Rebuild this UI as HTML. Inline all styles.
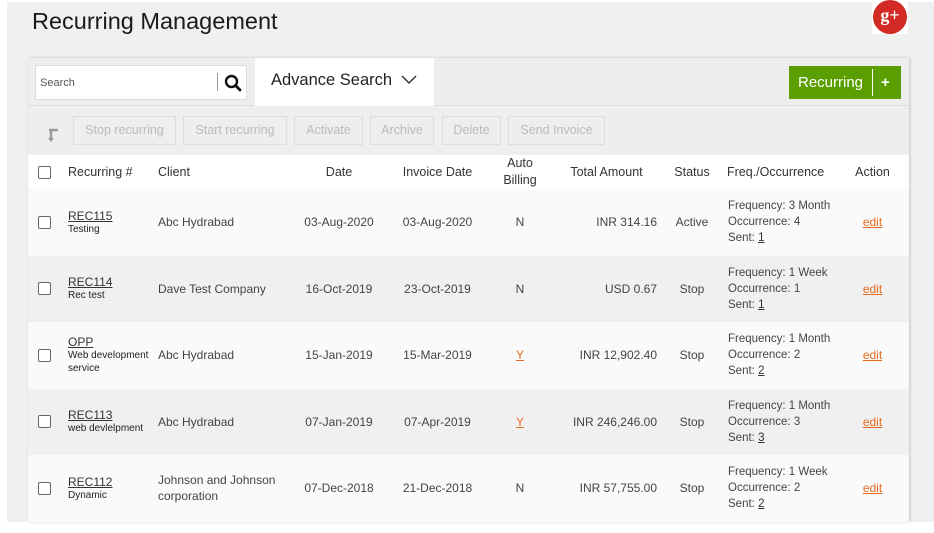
<!DOCTYPE html>
<html><head><meta charset="utf-8"><style>
*{margin:0;padding:0;box-sizing:border-box}
body{width:934px;height:533px;background:#fff;font-family:"Liberation Sans",sans-serif;color:#444;position:relative;overflow:hidden}
.bg{position:absolute;left:7px;top:2px;width:927px;height:520px;background:#f0f0f0}
h1{position:absolute;left:32px;top:8px;font-size:23.5px;font-weight:normal;color:#1a1a1a}
.gp{position:absolute;left:872px;top:0;width:36px;height:34px;background:#fff}
.gp div{position:absolute;left:1px;top:0;width:34px;height:34px;border-radius:50%;background:#d42a25;color:#fff;font:bold 18px "Liberation Serif",serif;text-align:center;line-height:30px}
.panel{position:absolute;left:28px;top:58px;width:881px;height:464px;background:#fff;box-shadow:1px 0 3px rgba(0,0,0,.18)}
.tb{position:absolute;left:0;top:0;width:881px;height:48px;background:#eee;border-bottom:1px solid #ddd}
.search{position:absolute;left:7px;top:7px;width:212px;height:35px;background:#fff;border:1px solid #ddd;font-size:11px;color:#555;padding:11px 0 0 4px}
.search .sep{position:absolute;left:181px;top:7px;width:1px;height:18px;background:#999}
.adv{position:absolute;left:227px;top:0;width:179px;height:48px;background:#fff;font-size:16.5px;color:#222;padding:13px 0 0 16px}
.btn{position:absolute;left:761px;top:8px;width:112px;height:33px;background:#5a9e00;color:#fff;font-size:15px;line-height:33px;padding-left:9px}
.btn .s{position:absolute;left:83px;top:3px;width:1px;height:27px;background:#fff}
.btn .p{position:absolute;left:92px;top:0;font-weight:bold}
.ab{position:absolute;left:0;top:48px;width:881px;height:49px;background:#eee}
.ab span{position:absolute;top:10px;height:29px;border:1px solid #ddd;font-size:12.5px;color:#bbb;line-height:27px;text-align:center}
table{position:absolute;left:0;top:97px;border-collapse:collapse;font-size:12px;table-layout:fixed}
td,th{font-weight:normal;vertical-align:middle;padding:0}
tr.h{height:34px;background:#fff;color:#333;font-size:12.5px}
tr.r{height:66.5px}
tr.a{background:#fafafa}tr.b{background:#f0f0f0}
.cb{width:13px;height:13px;border:1px solid #666;border-radius:2px;margin-left:10px;background:#fff}
u{color:#333}
.sm{font-size:10px;color:#222;line-height:13px;font-weight:bold;-webkit-text-stroke:0}
.sm{font-weight:normal}
.o{color:#e8691e}
.f{line-height:16px;font-size:11.5px}
</style></head><body>
<div class="bg"></div>
<h1>Recurring Management</h1>
<div class="gp"><div>g+</div></div>
<div class="panel">
 <div class="tb">
  <div class="search">Search<div class="sep"></div>
   <svg style="position:absolute;left:188px;top:8px" width="18" height="18" viewBox="0 0 18 18"><circle cx="7.5" cy="7.5" r="5.5" fill="none" stroke="#111" stroke-width="2.4"/><path d="M11.5 11.5L16 16" stroke="#111" stroke-width="2.8" stroke-linecap="round"/></svg></div>
  <div class="adv">Advance Search <svg width="16" height="10" viewBox="0 0 16 10" style="margin-left:4px"><path d="M1 1l7 7 7-7" fill="none" stroke="#333" stroke-width="1.5"/></svg></div>
  <div class="btn">Recurring<div class="s"></div><div class="p">+</div></div>
 </div>
 <div class="ab">
  <svg style="position:absolute;left:19px;top:22px" width="12" height="14" viewBox="0 0 12 14"><path d="M2 2h9M4 2v9" stroke="#999" stroke-width="2.5" fill="none"/><path d="M1 10l3 4 3-4z" fill="#999"/></svg>
  <span style="left:45px;width:103px">Stop recurring</span>
  <span style="left:155px;width:104px">Start recurring</span>
  <span style="left:266px;width:69px">Activate</span>
  <span style="left:342px;width:64px">Archive</span>
  <span style="left:414px;width:59px">Delete</span>
  <span style="left:480px;width:97px">Send Invoice</span>
 </div>
 <table>
  <colgroup><col style="width:32px"><col style="width:92px"><col style="width:138px"><col style="width:98px"><col style="width:99px"><col style="width:66px"><col style="width:107px"><col style="width:64px"><col style="width:121px"><col style="width:55px"><col style="width:9px"></colgroup>
  <tr class="h"><td><div class="cb"></div></td><td style="padding-left:8px">Recurring #</td><td style="padding-left:6px">Client</td><td style="text-align:center">Date</td><td style="text-align:center">Invoice Date</td><td style="text-align:center;line-height:17px">Auto<br>Billing</td><td style="text-align:center">Total Amount</td><td style="text-align:center">Status</td><td style="padding-left:3px">Freq./Occurrence</td><td style="text-align:center">Action</td><td></td></tr>
  <tr class="r a"><td><div class="cb"></div></td><td style="padding-left:8px"><u>REC115</u><div class="sm">Testing</div></td><td style="padding-left:6px">Abc Hydrabad</td><td style="text-align:center">03-Aug-2020</td><td style="text-align:center">03-Aug-2020</td><td style="text-align:center">N</td><td style="text-align:right;padding-right:3px">INR 314.16</td><td style="text-align:center">Active</td><td class="f" style="padding-left:4px">Frequency: 3 Month<br>Occurrence: 4<br>Sent: <u>1</u></td><td style="text-align:center"><u class="o">edit</u></td><td></td></tr>
  <tr class="r b"><td><div class="cb"></div></td><td style="padding-left:8px"><u>REC114</u><div class="sm">Rec test</div></td><td style="padding-left:6px">Dave Test Company</td><td style="text-align:center">16-Oct-2019</td><td style="text-align:center">23-Oct-2019</td><td style="text-align:center">N</td><td style="text-align:right;padding-right:3px">USD 0.67</td><td style="text-align:center">Stop</td><td class="f" style="padding-left:4px">Frequency: 1 Week<br>Occurrence: 1<br>Sent: <u>1</u></td><td style="text-align:center"><u class="o">edit</u></td><td></td></tr>
  <tr class="r a"><td><div class="cb"></div></td><td style="padding-left:8px"><u>OPP</u><div class="sm">Web development service</div></td><td style="padding-left:6px">Abc Hydrabad</td><td style="text-align:center">15-Jan-2019</td><td style="text-align:center">15-Mar-2019</td><td style="text-align:center"><u class="o">Y</u></td><td style="text-align:right;padding-right:3px">INR 12,902.40</td><td style="text-align:center">Stop</td><td class="f" style="padding-left:4px">Frequency: 1 Month<br>Occurrence: 2<br>Sent: <u>2</u></td><td style="text-align:center"><u class="o">edit</u></td><td></td></tr>
  <tr class="r b"><td><div class="cb"></div></td><td style="padding-left:8px"><u>REC113</u><div class="sm">web devlelpment</div></td><td style="padding-left:6px">Abc Hydrabad</td><td style="text-align:center">07-Jan-2019</td><td style="text-align:center">07-Apr-2019</td><td style="text-align:center"><u class="o">Y</u></td><td style="text-align:right;padding-right:3px">INR 246,246.00</td><td style="text-align:center">Stop</td><td class="f" style="padding-left:4px">Frequency: 1 Month<br>Occurrence: 3<br>Sent: <u>3</u></td><td style="text-align:center"><u class="o">edit</u></td><td></td></tr>
  <tr class="r a"><td><div class="cb"></div></td><td style="padding-left:8px"><u>REC112</u><div class="sm">Dynamic</div></td><td style="padding-left:6px;line-height:16px">Johnson and Johnson corporation</td><td style="text-align:center">07-Dec-2018</td><td style="text-align:center">21-Dec-2018</td><td style="text-align:center">N</td><td style="text-align:right;padding-right:3px">INR 57,755.00</td><td style="text-align:center">Stop</td><td class="f" style="padding-left:4px">Frequency: 1 Week<br>Occurrence: 2<br>Sent: <u>2</u></td><td style="text-align:center"><u class="o">edit</u></td><td></td></tr>
 </table>
</div>
</body></html>
